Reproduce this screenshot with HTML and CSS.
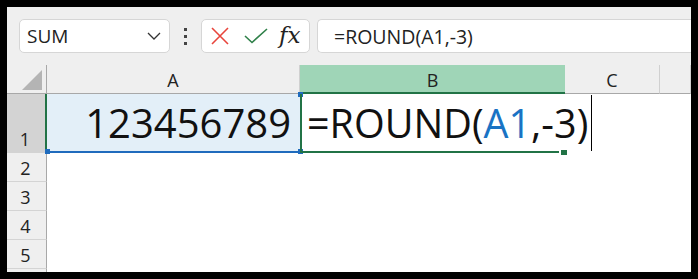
FILE: index.html
```html
<!DOCTYPE html>
<html lang="en">

<head>
    <meta charset="UTF-8" />
    <title>ROUND formula</title>
    <link rel="stylesheet" href="styles.css">
</head>

<body>
    <div class="window">
        <!-- Formula bar -->
        <div class="toolbar">
            <div class="name-box">
                <span>SUM</span>
                <svg class="chevron" width="14" height="8" viewBox="0 0 14 8">
                    <path d="M1 1 L7 7 L13 1" fill="none" stroke="#333" stroke-width="1.3" />
                </svg>
            </div>
            <div class="grip"><i></i><i></i><i></i></div>
            <div class="fx-box">
                <svg width="18" height="18" viewBox="0 0 18 18">
                    <path d="M1 1 L17 17 M17 1 L1 17" stroke="#e8453c" stroke-width="1.6" />
                </svg>
                <svg width="24" height="16" viewBox="0 0 24 16">
                    <path d="M1 8 L8 14.5 L23 1" fill="none" stroke="#2f8049" stroke-width="1.6" />
                </svg>
                <span class="fx">fx</span>
            </div>
            <div class="formula-box">=ROUND(A1,-3)</div>
        </div>

        <!-- Sheet grid -->
        <div class="sheet">
            <div class="corner"><span class="tri"></span></div>
            <div class="col-head">A</div>
            <div class="col-head active">B</div>
            <div class="col-head">C</div>
            <div class="col-head"></div>

            <div class="row-head active">1</div>
            <div class="cell ref">123456789<span class="handle h-tr"></span><span class="handle h-br"></span><span class="handle h-bl"></span></div>
            <div class="cell edit"><span>=ROUND(<span class="ref-text">A1</span>,-3)</span><span class="caret"></span><span class="handle h-br-green"></span></div>
            <div class="cell"></div>
            <div class="cell"></div>

            <div class="row-head">2</div>
            <div class="cell"></div><div class="cell"></div><div class="cell"></div><div class="cell"></div>
            <div class="row-head">3</div>
            <div class="cell"></div><div class="cell"></div><div class="cell"></div><div class="cell"></div>
            <div class="row-head">4</div>
            <div class="cell"></div><div class="cell"></div><div class="cell"></div><div class="cell"></div>
            <div class="row-head">5</div>
            <div class="cell"></div><div class="cell"></div><div class="cell"></div><div class="cell"></div>
            <div class="row-head"></div>
            <div class="cell"></div><div class="cell"></div><div class="cell"></div><div class="cell"></div>
        </div>
    </div>
</body>

</html>
```

FILE: styles.css
```css
body {
    margin: 0;
    padding: 7px;
    background: #000;
    font-family: "Open Sans", "Noto Sans", Arial, sans-serif;
    color: #222;
}

.window {
    width: 684px;
    height: 265px;
    background: #efefef;
    overflow: hidden;
}

/* --- formula bar --- */
.toolbar {
    height: 58px;
    display: flex;
    align-items: center;
    padding-left: 12px;
    box-sizing: border-box;
}

.name-box {
    width: 151px;
    height: 34px;
    box-sizing: border-box;
    background: #fff;
    border: 1px solid #d6d6d6;
    border-radius: 5px;
    display: flex;
    align-items: center;
    justify-content: space-between;
    padding: 0 8px 0 7px;
    font-size: 19px;
    color: #222;
}

.grip {
    width: 31px;
    display: flex;
    flex-direction: column;
    align-items: center;
    gap: 4px;
}

.grip i {
    width: 3px;
    height: 3px;
    background: #444;
}

.fx-box {
    width: 109px;
    height: 34px;
    box-sizing: border-box;
    background: #fff;
    border: 1px solid #d6d6d6;
    border-radius: 5px;
    display: flex;
    align-items: center;
    padding-left: 9px;
    gap: 15px;
}

.fx {
    font-family: "DejaVu Serif", "Liberation Serif", serif;
    font-style: italic;
    font-size: 23px;
    line-height: 1;
    color: #222;
    margin-left: -4px;
    margin-top: -2px;
}

.formula-box {
    flex: 1;
    margin-left: 7px;
    height: 34px;
    box-sizing: border-box;
    background: #fff;
    border: 1px solid #d6d6d6;
    border-right: none;
    border-radius: 5px 0 0 5px;
    display: flex;
    align-items: center;
    padding-left: 16px;
    font-size: 19.5px;
    color: #222;
}

/* --- sheet --- */
.sheet {
    display: grid;
    grid-template-columns: 40px 253px 265px 95px 31px;
    grid-template-rows: 29px 59px 29px 29px 29px 29px 29px;
    background: #fff;
}

.corner {
    background: #efefef;
    border-right: 1px solid #a8a8a8;
    border-bottom: 1px solid #a8a8a8;
    position: relative;
}

.tri {
    position: absolute;
    left: 15px;
    top: 5px;
    width: 0;
    height: 0;
    border-left: 20px solid transparent;
    border-bottom: 20px solid #b4b4b4;
}

.col-head {
    background: #efefef;
    border-bottom: 1px solid #a8a8a8;
    border-right: 1px solid #d0d0d0;
    display: flex;
    align-items: flex-end;
    justify-content: center;
    padding-bottom: 1px;
    font-size: 18px;
    color: #222;
}

.col-head.active {
    background: #9fd5b7;
    border-bottom: 2px solid #217346;
    border-right: none;
    padding-bottom: 0;
}

.row-head {
    background: #efefef;
    border-right: 1px solid #a8a8a8;
    border-bottom: 1px solid #d4d4d4;
    display: flex;
    align-items: flex-end;
    justify-content: center;
    padding-right: 2px;
    padding-bottom: 1px;
    font-size: 18px;
    color: #222;
}

.row-head.active {
    background: #d3d3d3;
    border-right: 2px solid #217346;
    border-bottom: none;
    padding-bottom: 2px;
}

.cell {
    position: relative;
    white-space: nowrap;
}

.cell.ref {
    background: #e3eff8;
    border-bottom: 2px solid #1f6bbd;
    display: flex;
    align-items: center;
    justify-content: flex-end;
    padding-right: 9px;
    font-size: 40px;
    color: #111;
}

.cell.edit {
    border-left: 2px solid #217346;
    border-bottom: 2px solid #217346;
    display: flex;
    align-items: center;
    padding-left: 5px;
    font-size: 39.5px;
    color: #111;
    z-index: 1;
}

.ref-text {
    color: #1a73c4;
}

.caret {
    flex: none;
    width: 1px;
    height: 56px;
    background: #000;
    margin-left: 3px;
}

.handle {
    position: absolute;
    width: 5px;
    height: 5px;
    background: #1f6bbd;
}

.h-tr { right: -3px; top: -2px; }
.h-br { right: -3px; bottom: -3px; }
.h-bl { left: -2px; bottom: -3px; }

.h-br-green {
    position: absolute;
    right: -2px;
    bottom: -4px;
    width: 6px;
    height: 5px;
    background: #217346;
    border-left: 2px solid #fff;
}
```
